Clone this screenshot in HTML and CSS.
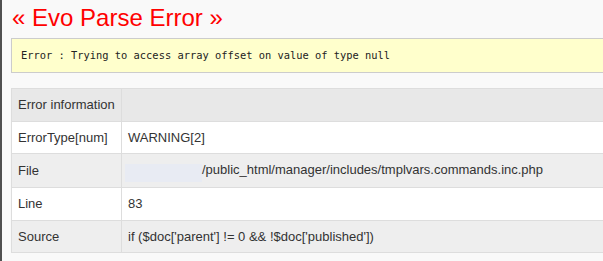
FILE: index.html
```html
<!DOCTYPE html>
<html lang="en">
<head>
  <meta charset="UTF-8">
  <title>Evo Parse Error</title>
  <link rel="stylesheet" href="styles.css">
</head>
<body>
<h1 class="title">&laquo; Evo Parse Error &raquo;</h1>
<div class="notice">Error : Trying to access array offset on value of type null</div>

<table class="info">
  <tr class="head">
    <td class="label">Error information</td>
    <td></td>
  </tr>
  <tr>
    <td class="label">ErrorType[num]</td>
    <td>WARNING[2]</td>
  </tr>
  <tr class="shade">
    <td class="label">File</td>
    <td><span class="hidden-path"></span>/public_html/manager/includes/tmplvars.commands.inc.php</td>
  </tr>
  <tr>
    <td class="label">Line</td>
    <td>83</td>
  </tr>
  <tr class="shade">
    <td class="label">Source</td>
    <td>if ($doc['parent'] != 0 &amp;&amp; !$doc['published'])</td>
  </tr>
</table>
</body>
</html>
```

FILE: styles.css
```css
html {
  overflow: hidden;
}
body {
  margin: 0;
  padding: 4px 0 0 9px;
  min-height: 261px;
  box-sizing: border-box;
  border-left: 2px solid #505050;
  background-color: #f9f9f9;
  font-family: "Liberation Sans", Arial, sans-serif;
  color: #333;
}
.title {
  margin: 0 0 7px 1px;
  font-size: 24px;
  font-weight: normal;
  line-height: 27px;
  color: #ff0000;
}
.notice {
  margin-right: -20px;
  padding: 10px 9px;
  border: 1px solid #cccccc;
  background-color: #ffffcc;
  font-family: "DejaVu Sans Mono", "Liberation Mono", monospace;
  font-size: 10.4px;
  line-height: 13px;
  color: #222;
}
/* error details */
.info {
  width: calc(100% + 20px);
  margin-top: 15px;
  border-collapse: collapse;
  font-size: 13px;
}
.info td {
  padding: 8px 6px;
  line-height: 15.5px;
  border: 1px solid #dddddd;
  background-color: #ffffff;
  white-space: nowrap;
}
.info td.label {
  width: 97px;
}
.info .head td {
  background-color: #e8e8e8;
}
.info .shade td {
  background-color: #eeeeee;
}
.hidden-path {
  display: inline-block;
  width: 77px;
  height: 18px;
  margin: -3px 0 -3px -3px;
  vertical-align: -5px;
  background-color: #e8ebf3;
}
```
